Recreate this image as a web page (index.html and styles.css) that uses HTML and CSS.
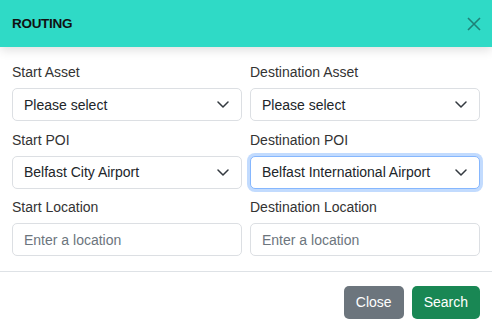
FILE: index.html
```html
<!DOCTYPE html>
<html lang="en">
<head>
<meta charset="utf-8">
<title>Routing</title>
<link rel="stylesheet" href="styles.css">
</head>
<body>
<div class="modal">
  <header class="modal-header">
    <h1 class="modal-title">ROUTING</h1>
    <button class="btn-close" type="button" aria-label="Close">
      <svg width="14" height="14" viewBox="0 0 14 14" aria-hidden="true"><path d="M1 1L13 13M13 1L1 13" stroke="#1e8177" stroke-width="1.6" fill="none"/></svg>
    </button>
  </header>
  <div class="modal-body">
    <div class="field">
      <label class="field-label">Start Asset</label>
      <div class="select-wrap">
        <select class="form-select"><option>Please select</option></select>
        <svg class="chev" width="12" height="7" viewBox="0 0 12 7" aria-hidden="true"><path d="M1 1l5 5 5-5" stroke="#343a40" stroke-width="1.5" stroke-linecap="round" stroke-linejoin="round" fill="none"/></svg>
      </div>
    </div>
    <div class="field">
      <label class="field-label">Destination Asset</label>
      <div class="select-wrap">
        <select class="form-select"><option>Please select</option></select>
        <svg class="chev" width="12" height="7" viewBox="0 0 12 7" aria-hidden="true"><path d="M1 1l5 5 5-5" stroke="#343a40" stroke-width="1.5" stroke-linecap="round" stroke-linejoin="round" fill="none"/></svg>
      </div>
    </div>
    <div class="field">
      <label class="field-label">Start POI</label>
      <div class="select-wrap">
        <select class="form-select"><option>Belfast City Airport</option></select>
        <svg class="chev" width="12" height="7" viewBox="0 0 12 7" aria-hidden="true"><path d="M1 1l5 5 5-5" stroke="#343a40" stroke-width="1.5" stroke-linecap="round" stroke-linejoin="round" fill="none"/></svg>
      </div>
    </div>
    <div class="field">
      <label class="field-label">Destination POI</label>
      <div class="select-wrap">
        <select class="form-select is-focused"><option>Belfast International Airport</option></select>
        <svg class="chev" width="12" height="7" viewBox="0 0 12 7" aria-hidden="true"><path d="M1 1l5 5 5-5" stroke="#343a40" stroke-width="1.5" stroke-linecap="round" stroke-linejoin="round" fill="none"/></svg>
      </div>
    </div>
    <div class="field">
      <label class="field-label">Start Location</label>
      <input class="form-control" type="text" placeholder="Enter a location">
    </div>
    <div class="field">
      <label class="field-label">Destination Location</label>
      <input class="form-control" type="text" placeholder="Enter a location">
    </div>
  </div>
  <footer class="modal-footer">
    <button class="btn btn-secondary" type="button">Close</button>
    <button class="btn btn-success" type="button">Search</button>
  </footer>
</div>
</body>
</html>
```
FILE: styles.css
```css
* { box-sizing: border-box; }
html, body { margin: 0; padding: 0; background: #fff; }
body {
  font-family: "Liberation Sans", Arial, sans-serif;
  font-size: 14px;
  color: #212529;
}
.modal { width: 492px; background: #fff; }
.modal-header {
  position: relative;
  z-index: 1;
  height: 47px;
  padding: 0 12px;
  display: flex;
  align-items: center;
  justify-content: space-between;
  background: #2fdac6;
  box-shadow: 0 3px 10px rgba(0, 0, 0, 0.13);
}
.modal-title {
  margin: 0;
  font-size: 13.5px;
  font-weight: 700;
  color: #111;
  letter-spacing: -0.3px;
}
.btn-close {
  border: 0;
  background: none;
  padding: 0;
  width: 14px;
  height: 14px;
  display: flex;
  margin-right: -1px;
}
.modal-body {
  padding: 15px 12px 15px;
  display: grid;
  grid-template-columns: 230px 230px;
  column-gap: 8px;
  row-gap: 8.5px;
}
.field { display: flex; flex-direction: column; gap: 6px; }
.field-label { line-height: 20px; color: #333; font-size: 14px; }
.select-wrap { position: relative; }
.form-select, .form-control {
  display: block;
  width: 100%;
  height: 33px;
  margin: 0;
  border: 1px solid #dcdfe3;
  border-radius: 5px;
  background: #fff;
  font-family: inherit;
  font-size: 14px;
  color: #212529;
  padding: 0 36px 0 11px;
  appearance: none;
  -webkit-appearance: none;
  outline: none;
}
.form-control { padding: 0 11px; }
.form-control::placeholder { color: #6c757d; opacity: 1; }
.form-select.is-focused {
  border-color: #86b7fe;
  box-shadow: 0 0 0 3px rgba(13, 110, 253, 0.25);
}
.chev {
  position: absolute;
  right: 13px;
  top: 13px;
  pointer-events: none;
}
.modal-footer {
  border-top: 1px solid #dee2e6;
  padding: 14px 12px 14px;
  display: flex;
  justify-content: flex-end;
  gap: 8px;
}
.btn {
  height: 33px;
  padding: 0 12px;
  border: 0;
  border-radius: 5px;
  font-family: inherit;
  font-size: 14px;
  color: #fff;
  line-height: 33px;
}
.btn-secondary { background: #6c757d; }
.btn-success { background: #198754; }
```
